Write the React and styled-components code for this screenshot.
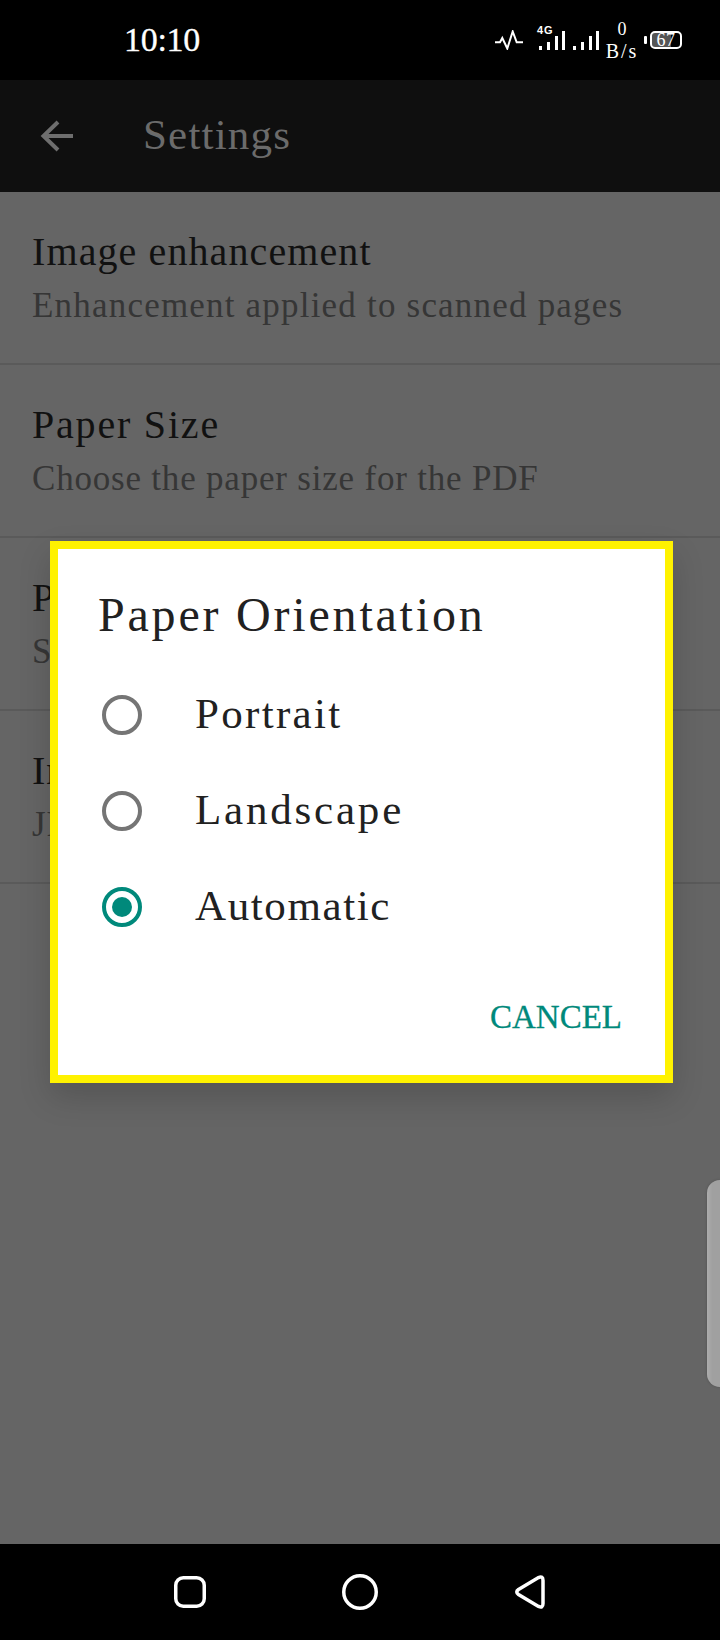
import React from "react";
import styled, { createGlobalStyle } from "styled-components";

const Global = createGlobalStyle`
  html, body { margin: 0; padding: 0; background: #000; }
  * { box-sizing: border-box; }
  body { font-family: "Liberation Serif", "Times New Roman", serif; }
`;

const Screen = styled.div`
  width: 720px;
  height: 1640px;
  display: flex;
  flex-direction: column;
  overflow: hidden;
  background: #656565;
`;

const StatusBar = styled.header`
  height: 80px;
  flex: none;
  background: #000;
  color: #fff;
  display: flex;
  align-items: center;
  padding: 0 38px 0 124px;
`;

const Clock = styled.span`
  font-size: 34px;
  line-height: 40px;
  letter-spacing: -0.3px;
  -webkit-text-stroke: 0.3px #fff;
`;

const StatusIcons = styled.div`
  margin-left: auto;
  display: flex;
  align-items: center;
`;

const Pulse = styled.svg`
  width: 28px;
  height: 20px;
  margin-right: 16px;
  display: block;
`;

const SignalGroup = styled.div`
  position: relative;
  width: 26px;
  height: 19px;
  margin-right: ${(p) => p.$gap}px;
`;

const SignalBars = styled.svg`
  display: block;
  width: 26px;
  height: 19px;
`;

const NetworkTag = styled.span`
  position: absolute;
  left: -2px;
  top: -6px;
  height: 9px;
  padding-right: 1px;
  background: #000;
  font: bold 11px/10px "Liberation Sans", Arial, sans-serif;
  letter-spacing: 0.8px;
`;

const Speed = styled.div`
  width: 34px;
  margin-right: 5px;
  margin-left: -2px;
  display: flex;
  flex-direction: column;
  align-items: center;
`;

const SpeedValue = styled.span`
  font-size: 18px;
  line-height: 13px;
  margin-bottom: 8px;
`;

const SpeedUnit = styled.span`
  font-size: 20px;
  line-height: 14px;
  letter-spacing: 2px;
  white-space: nowrap;
`;

const BatteryNub = styled.span`
  width: 3px;
  height: 8px;
  margin-right: 3px;
  background: #fff;
  border-radius: 1px;
`;

const Battery = styled.div`
  width: 32px;
  height: 18px;
  border: 2px solid #fff;
  border-radius: 5px;
  display: flex;
  align-items: center;
  justify-content: center;
  font-size: 18px;
  line-height: 14px;
  letter-spacing: 0.5px;
  background: linear-gradient(to right, #555 0 67%, #000 67%);
`;

const Toolbar = styled.div`
  height: 112px;
  flex: none;
  background: #0f0f0f;
  display: flex;
  align-items: center;
  padding-left: 40px;
`;

const BackIcon = styled.svg`
  width: 33px;
  height: 32px;
  display: block;
  margin-right: 70px;
`;

const ToolbarTitle = styled.h1`
  margin: 0 0 3px;
  font-size: 43px;
  line-height: 48px;
  font-weight: 400;
  letter-spacing: 1.2px;
  color: #6b6b6b;
`;

const Content = styled.main`
  position: relative;
  flex: 1;
  background: #656565;
`;

const Row = styled.div`
  height: 173px;
  padding: 38px 0 0 32px;
  border-bottom: 2px solid #5a5a5a;
`;

const RowTitle = styled.div`
  font-size: 40px;
  line-height: 44px;
  letter-spacing: ${(p) => p.$track}px;
  color: #111;
  white-space: nowrap;
`;

const RowSub = styled.div`
  margin-top: 12px;
  font-size: 35px;
  line-height: 40px;
  letter-spacing: ${(p) => p.$track}px;
  color: #363636;
  white-space: nowrap;
`;

const Dialog = styled.section`
  position: absolute;
  left: 50px;
  top: 349px;
  width: 623px;
  background: #fff;
  border: 8px solid #fff200;
  padding: 39px 43px 38px 44px;
  box-shadow: 0 14px 30px rgba(0, 0, 0, 0.16);
`;

const DialogTitle = styled.h2`
  margin: 0 0 25px -4px;
  font-size: 48px;
  line-height: 54px;
  font-weight: 400;
  letter-spacing: 2.8px;
  color: #212121;
`;

const Option = styled.div`
  height: 96px;
  display: flex;
  align-items: center;
  gap: 53px;
`;

const Radio = styled.span`
  width: 40px;
  height: 40px;
  flex: none;
  border-radius: 50%;
  border: 4.5px solid ${(p) => (p.$checked ? "#00897b" : "#757575")};
  display: flex;
  align-items: center;
  justify-content: center;
  &::after {
    content: "";
    width: 20px;
    height: 20px;
    border-radius: 50%;
    background: ${(p) => (p.$checked ? "#00897b" : "transparent")};
  }
`;

const OptionLabel = styled.span`
  font-size: 43px;
  line-height: 48px;
  letter-spacing: ${(p) => p.$track}px;
  color: #212121;
  padding-bottom: 3px;
`;

const Actions = styled.div`
  margin-top: 42px;
  display: flex;
  justify-content: flex-end;
`;

const CancelButton = styled.button`
  border: 0;
  padding: 0;
  background: none;
  font: 400 33px/40px "Liberation Serif", "Times New Roman", serif;
  color: #00897b;
  -webkit-text-stroke: 0.3px #00897b;
`;

const EdgeHandle = styled.div`
  position: absolute;
  right: 0;
  top: 988px;
  width: 13px;
  height: 207px;
  background: linear-gradient(to right, #adadad, #a0a0a0 40%);
  border-radius: 26px 0 0 26px;
  box-shadow: 0 0 3px rgba(0, 0, 0, 0.2);
`;

const NavBar = styled.nav`
  height: 96px;
  flex: none;
  background: #000;
  display: flex;
  justify-content: center;
  align-items: center;
`;

const NavSlot = styled.div`
  width: 170px;
  display: flex;
  justify-content: center;
`;

const NavIcon = styled.svg`
  display: block;
  width: ${(p) => p.$w}px;
  height: ${(p) => p.$h}px;
  fill: none;
  stroke: #fff;
  stroke-width: 3.5;
`;

const Bars = () => (
  <SignalBars viewBox="0 0 26 19" fill="#fff">
    <rect x="0" y="15" width="3" height="4" />
    <rect x="8" y="11" width="3" height="8" />
    <rect x="16" y="5" width="3" height="14" />
    <rect x="23" y="0" width="3" height="19" />
  </SignalBars>
);

const settings = [
  { t: "Image enhancement", tt: 1.1, s: "Enhancement applied to scanned pages", st: 1.2 },
  { t: "Paper Size", tt: 1.8, s: "Choose the paper size for the PDF", st: 0.8 },
  { t: "Paper Orientation", tt: 1, s: "Set the paper orientation", st: 1 },
  { t: "Image Quality", tt: 1, s: "JPEG quality for scanned pages", st: 1 },
];

const options = [
  { label: "Portrait", track: 2.3 },
  { label: "Landscape", track: 2.8 },
  { label: "Automatic", track: 1.6, checked: true },
];

export default function App() {
  return (
    <Screen>
      <Global />
      <StatusBar>
        <Clock>10:10</Clock>
        <StatusIcons>
          <Pulse viewBox="0 0 28 20" fill="none" stroke="#fff" strokeWidth="2">
            <polyline points="0,12.3 5,12.3 7.3,8 12.3,18.5 17.7,1.5 21.7,12.3 28,12.3" />
          </Pulse>
          <SignalGroup $gap={8}>
            <NetworkTag>4G</NetworkTag>
            <Bars />
          </SignalGroup>
          <SignalGroup $gap={8}>
            <Bars />
          </SignalGroup>
          <Speed>
            <SpeedValue>0</SpeedValue>
            <SpeedUnit>B/s</SpeedUnit>
          </Speed>
          <BatteryNub />
          <Battery>67</Battery>
        </StatusIcons>
      </StatusBar>
      <Toolbar>
        <BackIcon viewBox="0 0 33 32" fill="none" stroke="#6e6e6e" strokeWidth="4">
          <path d="M33 16H3" />
          <path d="M18 2 3.5 16 18 30" />
        </BackIcon>
        <ToolbarTitle>Settings</ToolbarTitle>
      </Toolbar>
      <Content>
        {settings.map((r) => (
          <Row key={r.t}>
            <RowTitle $track={r.tt}>{r.t}</RowTitle>
            <RowSub $track={r.st}>{r.s}</RowSub>
          </Row>
        ))}
        <EdgeHandle />
        <Dialog>
          <DialogTitle>Paper Orientation</DialogTitle>
          {options.map((o) => (
            <Option key={o.label}>
              <Radio $checked={o.checked} />
              <OptionLabel $track={o.track}>{o.label}</OptionLabel>
            </Option>
          ))}
          <Actions>
            <CancelButton>CANCEL</CancelButton>
          </Actions>
        </Dialog>
      </Content>
      <NavBar>
        <NavSlot>
          <NavIcon $w={32} $h={32} viewBox="0 0 32 32">
            <rect x="1.75" y="1.75" width="28.5" height="28.5" rx="7.5" />
          </NavIcon>
        </NavSlot>
        <NavSlot>
          <NavIcon $w={36} $h={36} viewBox="0 0 36 36">
            <circle cx="18" cy="18" r="16.25" />
          </NavIcon>
        </NavSlot>
        <NavSlot>
          <NavIcon $w={32} $h={36} viewBox="0 0 32 36">
            <path d="M4.5 15.5 24.5 3.6Q29 1.5 29 6.5V29.5Q29 34.5 24.5 32.4L4.5 20.5Q1 18 4.5 15.5Z" />
          </NavIcon>
        </NavSlot>
      </NavBar>
    </Screen>
  );
}
